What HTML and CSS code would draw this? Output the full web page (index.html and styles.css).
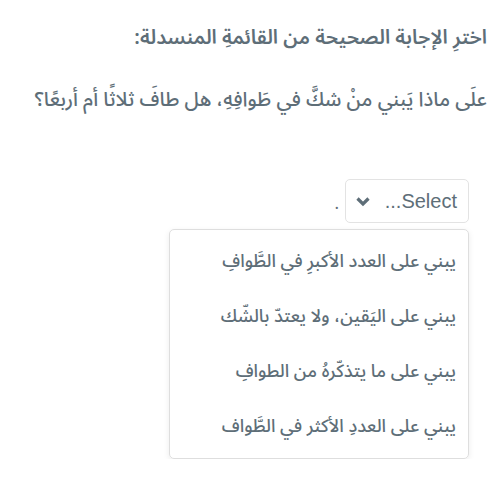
FILE: index.html
```html
<!DOCTYPE html>
<html lang="ar" dir="rtl">
<head>
    <meta charset="UTF-8">
    <meta name="viewport" content="width=device-width, initial-scale=1.0">
    <title>اختر الإجابة</title>
    <link rel="stylesheet" href="styles.css">
</head>
<body>

    <p class="title">اخترِ الإجابة الصحيحة من القائمةِ المنسدلة:</p>

    <p class="question">علَى ماذا يَبني منْ شكَّ في طَوافِهِ، هل طافَ ثلاثًا أم أربعًا؟</p>

    <div class="answer">
        <div class="pick">
            <div class="select">
                <span class="select-text">Select...</span>
                <svg class="chevron" width="16" height="11" viewBox="0 0 16 11">
                    <path d="M2.5 2.5 L8 8 L13.5 2.5" fill="none" stroke="#5e6e78" stroke-width="3.2"/>
                </svg>
            </div>
            <span class="dot">.</span>
        </div>

        <!-- open menu -->
        <ul class="menu">
            <li>يبني على العدد الأكبرِ في الطَّوافِ</li>
            <li>يبني على اليَقين، ولا يعتدّ بالشّك</li>
            <li>يبني على ما يتذكّرهُ من الطوافِ</li>
            <li>يبني على العددِ الأكثر في الطَّواف</li>
        </ul>
    </div>

</body>
</html>
```

FILE: styles.css
```css
body {
    margin: 0;
    padding: 0 17px 0 16px;
    font-family: "Noto Sans Arabic", "DejaVu Sans", sans-serif;
    color: #5e6e78;
    background-color: #fff;
}

.title {
    margin: 25px 0 0;
    font-size: 20px;
    font-weight: 600;
    line-height: 26px;
}

.question {
    margin: 36px 0 0;
    font-size: 20px;
    font-weight: 500;
    line-height: 26px;
}

.answer {
    margin-top: 66px;
    padding-right: 18px;
}

.pick {
    display: flex;
    align-items: center;
    gap: 6px;
}

.select {
    width: 124px;
    height: 44px;
    box-sizing: border-box;
    border: 1px solid #e3e3e3;
    border-radius: 5px;
    display: flex;
    align-items: center;
    justify-content: space-between;
    padding: 0 11px 0 9px;
}

.select-text {
    font-family: "Liberation Sans", Arial, sans-serif;
    font-size: 20px;
    direction: rtl;
}

.chevron {
    margin-top: 1px;
}

.dot {
    font-size: 17px;
    margin-top: 6px;
}

.menu {
    list-style: none;
    margin: 6px 0 0;
    padding: 4px 0;
    width: 300px;
    box-sizing: border-box;
    border: 1px solid #dedede;
    border-radius: 5px;
    box-shadow: 0 2px 6px rgba(0, 0, 0, 0.08);
}

.menu li {
    height: 55px;
    line-height: 55px;
    padding-right: 12px;
    font-size: 18px;
    font-weight: 500;
}
```
